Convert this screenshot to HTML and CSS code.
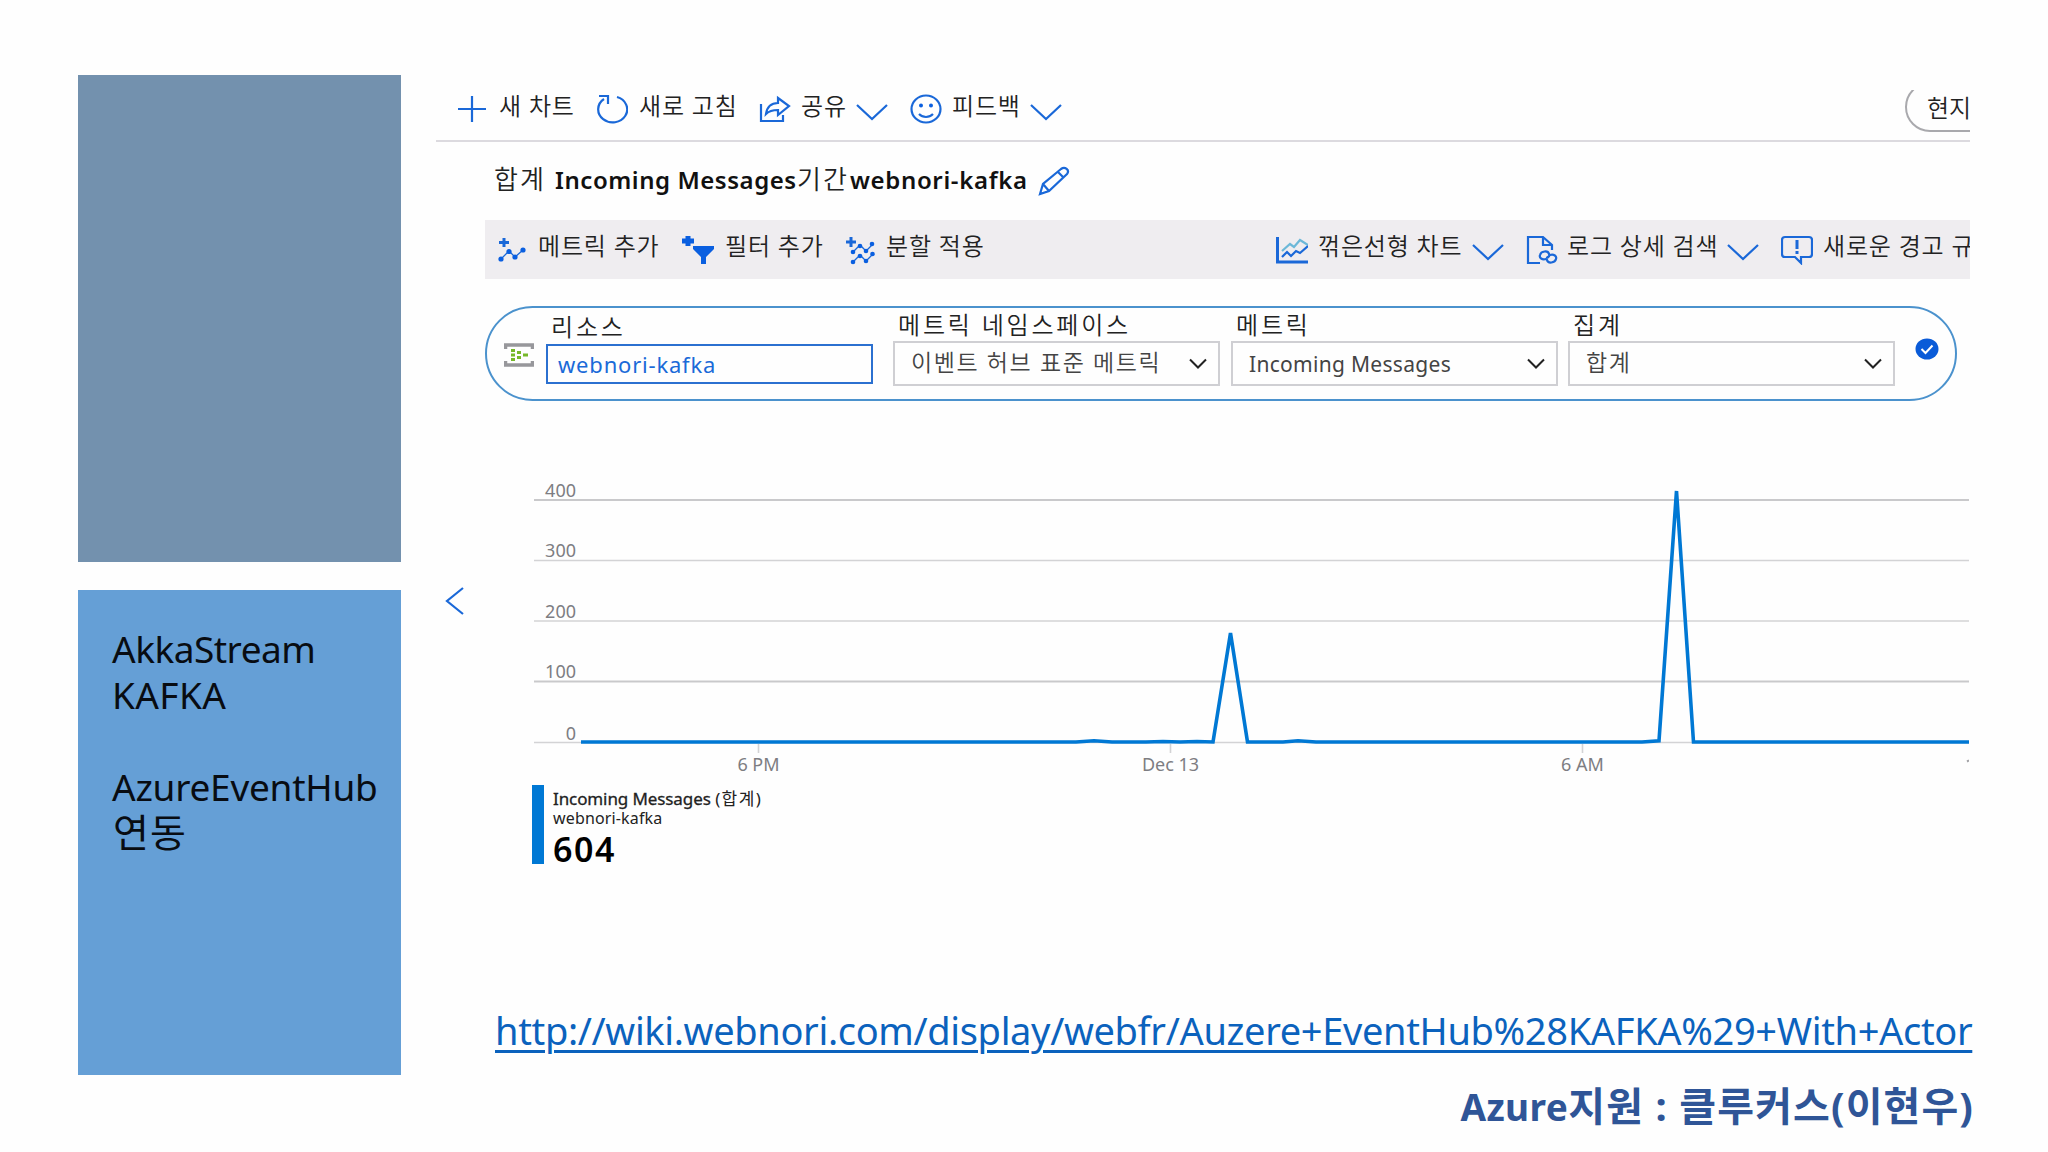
FILE: index.html
```html
<!DOCTYPE html>
<html lang="ko">
<head>
    <meta charset="UTF-8">
    <meta name="viewport" content="width=device-width, initial-scale=1.0">
    <title>AkkaStream KAFKA - AzureEventHub 연동</title>
    <link rel="stylesheet" href="styles.css">
</head>
<body>
    <div class="slide">
        <aside class="side">
            <div class="side-top"></div>
            <div class="side-title">
                <p class="t-akka">AkkaStream</p>
                <p class="t-kafka">KAFKA</p>
                <p class="t-hub">AzureEventHub</p>
                <p class="t-ko">연동</p>
            </div>
        </aside>

        <main class="content">
            <section class="portal">
                <!-- Top toolbar -->
                <div class="toolbar">
                    <svg class="ic" width="30" height="28" viewBox="0 0 30 28"><path d="M15 1v26M1 14h28"/></svg>
                    <span class="lbl l-new">새 차트</span>
                    <svg class="ic" width="32" height="30" viewBox="0 0 32 30"><path d="M21 3A14.500 13 0 1 1 8 5M3 2h9v8"/></svg>
                    <span class="lbl l-refresh">새로 고침</span>
                    <svg class="ic" width="32" height="28" viewBox="0 0 32 28"><path d="M2 9v17h22v-6M19 3l11 8-11 9v-5c-6 0-9 1-12 4 1-7 5-11 12-11z"/></svg>
                    <span class="lbl l-share">공유</span>
                    <svg class="ic chev" width="32" height="18" viewBox="0 0 32 18"><path d="M1 2l15 14L31 2"/></svg>
                    <svg class="ic face" width="32" height="30" viewBox="0 0 32 30"><ellipse cx="16" cy="15" rx="14.500" ry="13.500"/><path d="M9 20c4 4 10 4 14 0"/><circle class="dot" cx="11" cy="11.500" r="2"/><circle class="dot" cx="21" cy="11.500" r="2"/></svg>
                    <span class="lbl l-feedback">피드백</span>
                    <svg class="ic chev" width="32" height="18" viewBox="0 0 32 18"><path d="M1 2l15 14L31 2"/></svg>
                    <div class="time">현지</div>
                </div>

                <h1 class="chart-title">
                    <span class="ko k1">합계</span><b class="b1">Incoming Messages</b><span class="ko k2">기간</span><b class="b2">webnori-kafka</b>
                    <svg class="ic" width="32" height="30" viewBox="0 0 32 30"><path d="M2 28l3-10L23 3c4-3 9 1 6 5L11 25zM5 18l6 7M20 6l6 6"/></svg>
                </h1>

                <!-- Metric toolbar -->
                <div class="metricbar">
                    <svg class="ic" width="28" height="26" viewBox="0 0 28 26"><path class="thick" d="M6 1v9M1 5.500h10"/><path class="thin" d="M3 22l8-8 6 6 8-7"/><g class="dot"><circle cx="3" cy="22" r="2.600"/><circle cx="11" cy="14.500" r="2.600"/><circle cx="17" cy="20" r="2.600"/><circle cx="25" cy="13" r="2.600"/></g></svg>
                    <span class="lbl l-addm">메트릭 추가</span>
                    <svg class="ic" width="32" height="30" viewBox="0 0 32 30"><path class="fat" d="M6 1v10M0 6h12"/><path class="dot" d="M11 11h21v3l-8 8v7h-5v-7l-8-8z"/></svg>
                    <span class="lbl l-addf">필터 추가</span>
                    <svg class="ic" width="30" height="30" viewBox="0 0 30 30"><path class="thick" d="M6 2v10M1 7h10"/><path class="thin" d="M8 17l7-7 6 6 7-7M8 27l7-7 6 6 7-7"/><g class="dot"><circle cx="8" cy="17" r="2.300"/><circle cx="15" cy="11" r="2.300"/><circle cx="21" cy="16" r="2.300"/><circle cx="27" cy="9" r="2.300"/><circle cx="8" cy="27" r="2.300"/><circle cx="15" cy="21" r="2.300"/><circle cx="21" cy="26" r="2.300"/><circle cx="27.500" cy="19" r="2.300"/></g></svg>
                    <span class="lbl l-split">분할 적용</span>

                    <svg class="ic m-chart" width="32" height="28" viewBox="0 0 32 28"><path class="teal" d="M6 15l8-7 4 3 6-7 8 5"/><path d="M6 21l5-5 4 4 5-5 4 2 8-7"/><path class="thick" d="M1.500 1v25H32"/></svg>
                    <span class="lbl l-line">꺾은선형 차트</span>
                    <svg class="ic chev" width="32" height="18" viewBox="0 0 32 18"><path d="M1 2l15 14L31 2"/></svg>
                    <svg class="ic m-log" width="32" height="30" viewBox="0 0 32 30"><path d="M14 28H2V2h15l9 8v5M17 2v8h9"/><path d="M20 24c-4 1-7-1-6-4 1-4 8-5 9-1 1 2-1 4-3 4M24 20c4-1 7 1 6 4-1 4-8 5-9 1-1-2 1-4 3-4"/></svg>
                    <span class="lbl l-log">로그 상세 검색</span>
                    <svg class="ic chev" width="32" height="18" viewBox="0 0 32 18"><path d="M1 2l15 14L31 2"/></svg>
                    <svg class="ic m-alert" width="32" height="30" viewBox="0 0 32 30"><path d="M4 2h24q3 0 3 3v14q0 3-3 3h-8v6l-6-6H4q-3 0-3-3V5q0-3 3-3z"/><path class="thick" d="M16 5v9M16 16v3"/></svg>
                    <span class="lbl l-alert">새로운 경고 규</span>
                </div>

                <!-- Metric selector -->
                <div class="selector">
                    <svg class="hub" width="30" height="24" viewBox="0 0 30 24"><path class="frame" d="M1.500 6V2h27v4M1.500 18v4h27v-4"/><path class="blocks" d="M7 6h4v3H7zM7 10.500h4v3H7zM7 15h4v3H7zM13 8h4v3h-4zM13 13h4v3h-4zM19 10.500h5v3h-5z"/></svg>
                    <div class="field f-res">
                        <label>리소스</label>
                        <div class="box"><span class="v-res">webnori-kafka</span></div>
                    </div>
                    <div class="field f-ns">
                        <label>메트릭 네임스페이스</label>
                        <div class="box"><span class="v-ko">이벤트 허브 표준 메트릭</span><svg width="18" height="12" viewBox="0 0 18 12"><path d="M1 1.500l8 8 8-8"/></svg></div>
                    </div>
                    <div class="field f-met">
                        <label>메트릭</label>
                        <div class="box"><span class="v-met">Incoming Messages</span><svg width="18" height="12" viewBox="0 0 18 12"><path d="M1 1.500l8 8 8-8"/></svg></div>
                    </div>
                    <div class="field f-agg">
                        <label>집계</label>
                        <div class="box"><span class="v-ko">합계</span><svg width="18" height="12" viewBox="0 0 18 12"><path d="M1 1.500l8 8 8-8"/></svg></div>
                    </div>
                    <svg class="check" width="24" height="22" viewBox="0 0 24 22"><ellipse cx="12" cy="11" rx="11.500" ry="10.500"/><path d="M6.500 11l4 4 7-7.500"/></svg>
                </div>

                <div class="chart-row">
                    <svg class="ic prev" width="19" height="30" viewBox="0 0 19 30"><path d="M18 2L2 15l16 13"/></svg>
                    <svg class="chart" width="1435" height="310" viewBox="534 470 1435 310">
                        <g class="grid">
                            <path class="major" d="M534 500h1435M534 681.500h1435"/>
                            <path d="M534 560.500h1435M534 621h1435M534 742.500h1435"/>
                            <path d="M758.500 744v9M1170.500 744v9M1582.500 744v9"/>
                        </g>
                        <g class="y-labels">
                            <text x="576" y="496.500">400</text>
                            <text x="576" y="557">300</text>
                            <text x="576" y="618">200</text>
                            <text x="576" y="678">100</text>
                            <text x="576" y="739.500">0</text>
                        </g>
                        <g class="x-labels">
                            <text x="758.500" y="771">6 PM</text>
                            <text x="1170.500" y="771">Dec 13</text>
                            <text x="1582.500" y="771">6 AM</text>
                        </g>
                        <!-- start of the next tick label, cut by the chart edge -->
                        <path class="next-tick" d="M1967 761.500l2-1"/>
                        <path class="series" d="M581 742H1076L1094 740.800L1112 742H1146L1163 741.500L1180 742L1197 741.500L1213 742L1230.500 633L1247.500 742H1283L1298 740.800L1316 742H1642L1659 740.800L1676.500 491L1693.500 742H1969"/>
                    </svg>
                </div>

                <div class="legend">
                    <p class="lg-name"><span class="lg-en">Incoming Messages</span> <span class="lg-ko">(합계)</span></p>
                    <p class="lg-res">webnori-kafka</p>
                    <p class="lg-val">604</p>
                </div>
            </section>

            <a class="wiki" href="http://wiki.webnori.com/display/webfr/Auzere+EventHub%28KAFKA%29+With+Actor">http://wiki.webnori.com/display/webfr/Auzere+EventHub%28KAFKA%29+With+Actor</a>
            <p class="credit">Azure<span>지원 : 클루커스(이현우)</span></p>
        </main>
    </div>
</body>
</html>
```
FILE: styles.css
```css
* {
    box-sizing: border-box;
}
body {
    margin: 0;
    background-color: #fefefe;
    font-family: "Noto Sans", "Noto Sans CJK KR", sans-serif;
    color: #222;
}
p, h1 {
    margin: 0;
}
.slide {
    display: flex;
    width: 2048px;
    height: 1152px;
    overflow: hidden;
}

/* left column */
.side {
    width: 323px;
    margin-left: 78px;
    padding-top: 75px;
    flex: none;
}
.side-top {
    height: 487px;
    background-color: #7391ae;
}
.side-title {
    height: 485px;
    margin-top: 28px;
    padding: 36px 0 0 34px;
    background-color: #659fd6;
    color: #080c12;
    font-size: 37px;
    line-height: 46px;
    white-space: nowrap;
}
.side-title p {
    height: 46px;
}
.t-akka { letter-spacing: -0.5px; }
.t-kafka { letter-spacing: 0.4px; }
.side-title .t-hub {
    margin-top: 46px;
    letter-spacing: -0.25px;
}
.side-title .t-ko {
    padding-left: 1px;
    font-size: 39px;
    line-height: 44px;
    letter-spacing: 1px;
}

.content {
    display: flex;
    flex-direction: column;
    margin-left: 35px;
    width: 1538px;
    flex: none;
}
.portal {
    width: 1534px;
    height: 810px;
    margin-top: 90px;
    overflow: hidden;
}

/* icons */
.ic {
    flex: none;
    fill: none;
    stroke: #1a68d8;
    stroke-width: 2.2;
}
.ic .dot {
    fill: #0a5fe0;
    stroke: none;
}
.ic .thin {
    stroke-width: 1.3;
}
.ic .thick {
    stroke-width: 3;
}
.ic .fat {
    stroke: #0a5fe0;
    stroke-width: 5;
}
.ic .teal {
    stroke: #6cb8d8;
}
.lbl {
    flex: none;
    font-size: 24px;
    font-weight: 350;
    line-height: 28px;
    letter-spacing: 0.8px;
    white-space: nowrap;
    margin-bottom: 7px;
}

.toolbar {
    display: flex;
    align-items: center;
    height: 52px;
    padding: 0 0 12px 21px;
    border-bottom: 2px solid #dcdadf;
}
.toolbar .chev {
    margin-top: 6px;
}
.time {
    flex: none;
    align-self: flex-start;
    width: 160px;
    height: 50px;
    margin: -8px -95px 0 auto;
    padding-left: 20px;
    border: 2px solid #a9a9ad;
    border-radius: 25px;
    font-size: 24px;
    font-weight: 350;
    line-height: 47px;
}
.l-new { width: 77px; margin-left: 12px; margin-right: 20px; }
.l-refresh { width: 98px; margin-left: 11px; margin-right: 22px; }
.l-share { width: 46px; margin-left: 10px; margin-right: 9px; }
.face { margin-left: 22px; }
.l-feedback { width: 69px; margin-left: 10px; margin-right: 9px; }

.chart-title {
    display: flex;
    align-items: center;
    height: 78px;
    padding-left: 58px;
    font-size: 24px;
    font-weight: 400;
    line-height: 34px;
    white-space: nowrap;
}
.chart-title b {
    margin-bottom: 2px;
    font-weight: 600;
    color: #111;
}
.chart-title .ko {
    margin-bottom: 5px;
    font-size: 26px;
    font-weight: 350;
    letter-spacing: 2px;
}
.k1 { width: 61px; }
.b1 { width: 242px; letter-spacing: 0.55px; }
.k2 { width: 53px; }
.b2 { width: 188px; letter-spacing: 0.65px; }

.metricbar {
    display: flex;
    align-items: center;
    height: 59px;
    margin-left: 49px;
    padding-left: 13px;
    background-color: #efedf0;
}
.metricbar .chev {
    margin-top: 5px;
}
.l-addm { width: 121px; margin-left: 12px; margin-right: 23px; }
.l-addf { width: 98px; margin-left: 11px; margin-right: 22px; }
.l-split { width: 98px; margin-left: 11px; }
.m-chart { margin-left: 292px; }
.l-line { width: 146px; margin-left: 10px; margin-right: 8px; }
.m-log, .m-alert { margin-left: 22px; }
.l-log { width: 151px; margin-left: 9px; margin-right: 9px; }
.l-alert { margin-left: 10px; }

/* metric selector */
.selector {
    display: flex;
    width: 1472px;
    height: 95px;
    margin: 27px 0 0 49px;
    padding-left: 17px;
    border: 2px solid #4b92cd;
    border-radius: 48px;
}
.hub {
    margin: 35px 12px 0 0;
}
.frame {
    fill: none;
    stroke: #97979b;
    stroke-width: 3.5;
}
.blocks {
    fill: #76b82a;
}
.field {
    width: 327px;
    flex: none;
}
.field label {
    display: block;
    height: 33px;
    padding-left: 5px;
    font-size: 24px;
    font-weight: 350;
    line-height: 33px;
    letter-spacing: 2.8px;
    white-space: nowrap;
}
.box {
    display: flex;
    align-items: center;
    justify-content: space-between;
    height: 45px;
    padding: 0 11px 0 16px;
    border: 2px solid #cfcfd3;
    font-size: 21px;
    line-height: 30px;
    color: #444;
    white-space: nowrap;
}
.box svg {
    fill: none;
    stroke: #222;
    stroke-width: 2;
}
.v-ko {
    margin-bottom: 3px;
    font-size: 23px;
    font-weight: 350;
    letter-spacing: 1.6px;
}
.v-met {
    letter-spacing: 0.3px;
}
.v-res {
    font-size: 22px;
    letter-spacing: 0.8px;
}
.f-res label {
    height: 36px;
    line-height: 38px;
}
.f-res .box {
    height: 40px;
    padding-left: 10px;
    border-color: #2b70d0;
    color: #1a6ad8;
}
.f-ns { margin-left: 20px; }
.f-met { margin-left: 11px; }
.f-agg { margin-left: 10px; }
.check {
    margin: 30px 0 0 20px;
}
.check ellipse {
    fill: #0a5bd8;
}
.check path {
    fill: none;
    stroke: #fff;
    stroke-width: 2;
}

/* chart */
.chart-row {
    display: flex;
    height: 379px;
    padding: 69px 0 0 9px;
}
.prev {
    margin: 116px 70px 0 0;
}
.chart {
    flex: none;
}
.grid path {
    stroke: #d3d3d5;
    stroke-width: 1.6;
}
.grid .major {
    stroke: #c9c9cb;
    stroke-width: 2.2;
}
.next-tick {
    stroke: #a0a0a4;
    stroke-width: 2;
}
.chart text {
    font-size: 18px;
    fill: #7d7d82;
}
.y-labels {
    text-anchor: end;
}
.x-labels {
    text-anchor: middle;
}
.series {
    fill: none;
    stroke: #0078d4;
    stroke-width: 3.6;
}

.legend {
    height: 79px;
    margin: 5px 0 0 96px;
    padding-left: 9px;
    border-left: 12px solid #0078d4;
    white-space: nowrap;
}
.lg-name {
    height: 26px;
    font-size: 17px;
    line-height: 27px;
}
.lg-en {
    letter-spacing: -0.1px;
    -webkit-text-stroke: 0.3px #222;
}
.lg-ko {
    letter-spacing: 1.4px;
}
.lg-res {
    height: 14px;
    font-size: 16px;
    line-height: 14px;
    letter-spacing: 0.15px;
}
.lg-val {
    font-size: 34px;
    font-weight: 600;
    line-height: 49px;
    letter-spacing: 1.5px;
    color: #000;
}

/* footer */
.wiki {
    margin: 102px 0 0 59px;
    font-size: 38px;
    line-height: 56px;
    letter-spacing: -0.34px;
    color: #0b62bd;
    text-underline-offset: 5px;
    text-decoration-thickness: 3px;
    white-space: nowrap;
}
.credit {
    margin-top: 20px;
    font-size: 37px;
    font-weight: 700;
    line-height: 56px;
    letter-spacing: 0.4px;
    text-align: right;
    color: #2f5597;
    white-space: nowrap;
}
.credit span {
    font-size: 40px;
    letter-spacing: 1.1px;
}
```
